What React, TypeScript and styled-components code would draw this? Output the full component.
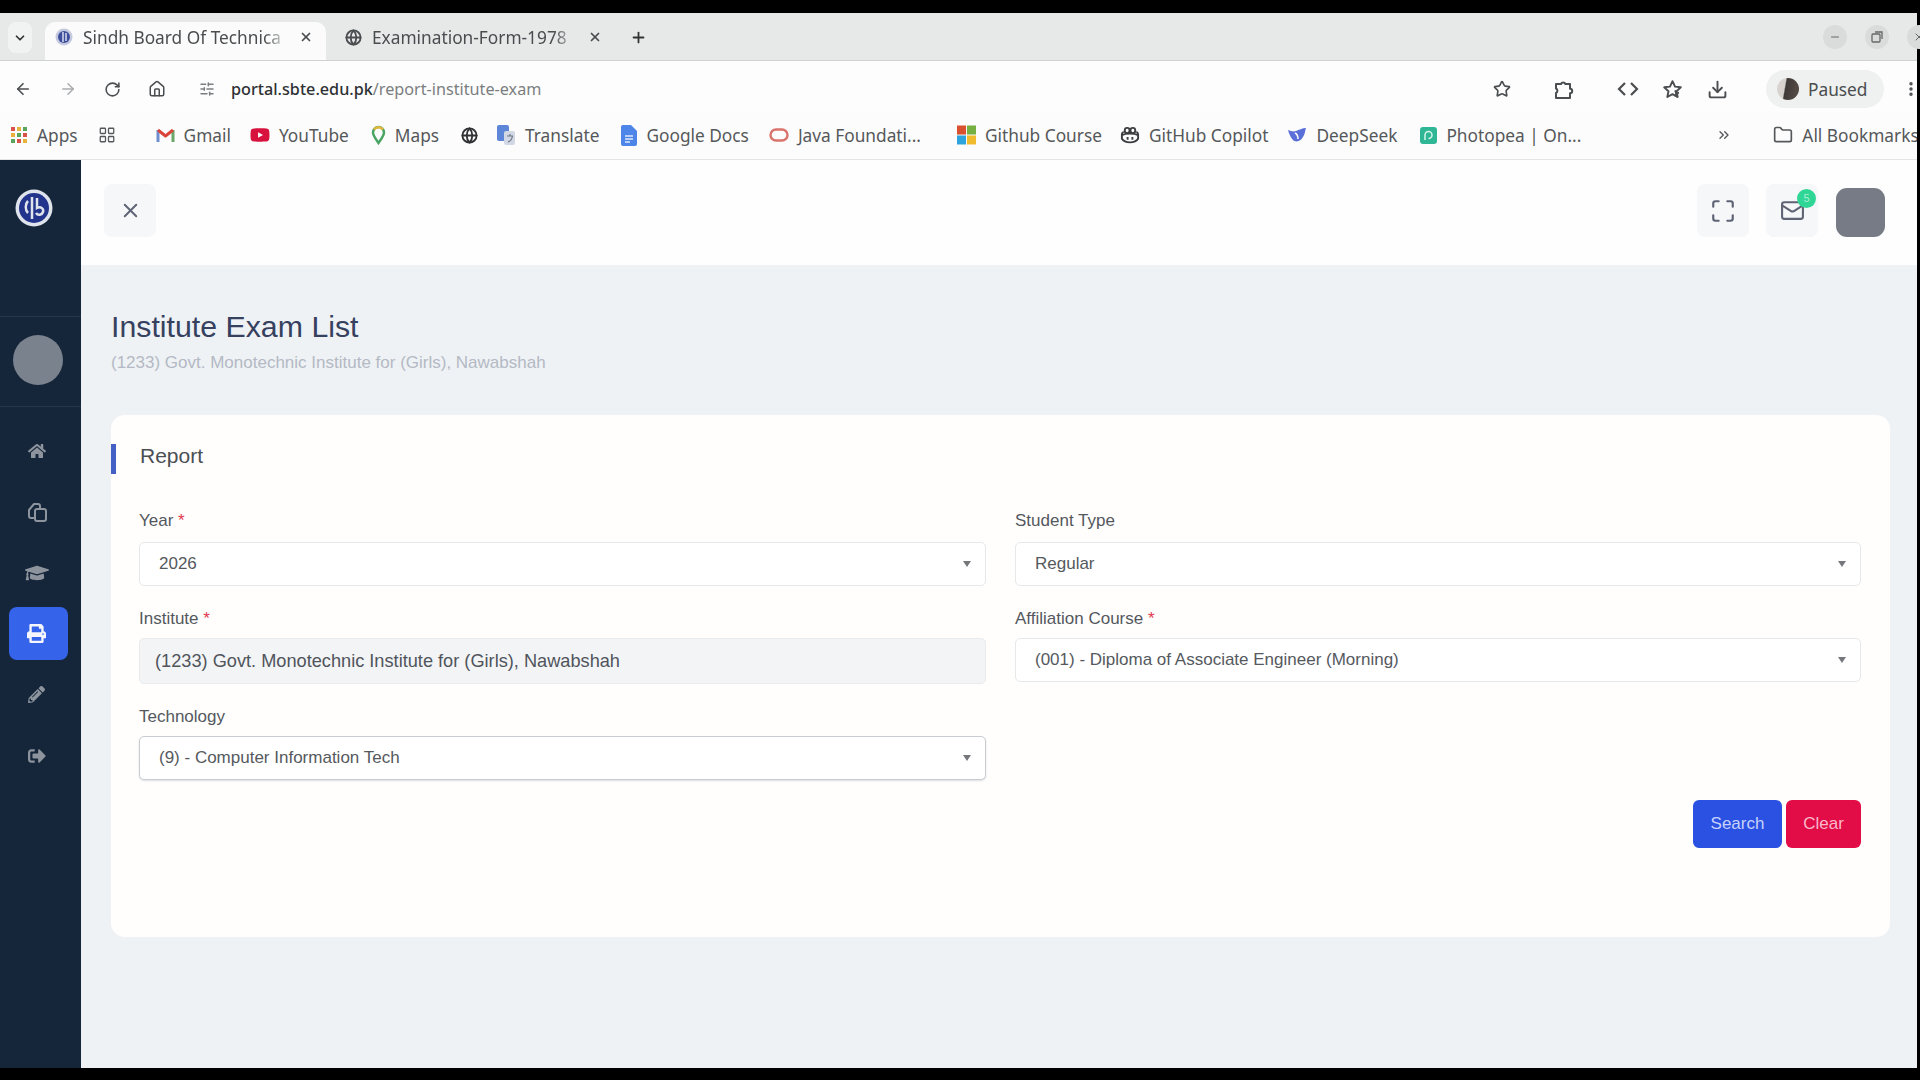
import React from "react";
import styled, { createGlobalStyle } from "styled-components";
import {
  ArrowLeft,
  ArrowRight,
  ChevronDown,
  ChevronsRight,
  Download,
  Folder,
  Globe,
  Home,
  LayoutGrid,
  Mail,
  Maximize,
  Minus,
  MoreVertical,
  Plus,
  RotateCw,
  SlidersHorizontal,
  Star,
  X,
} from "lucide-react";
import {
  FaGraduationCap,
  FaHome,
  FaPencilAlt,
  FaPrint,
  FaSignOutAlt,
  FaYoutube,
} from "react-icons/fa";

const GlobalStyle = createGlobalStyle`
  html, body {
    margin: 0;
    padding: 0;
    background: #000;
  }
  * { box-sizing: border-box; }
`;

const Screen = styled.div`
  width: 1920px;
  height: 1080px;
  background: #000;
  padding: 13px 3px 12px 0;
  display: flex;
  flex-direction: column;
  overflow: hidden;
  font-family: "Liberation Sans", Arial, sans-serif;
`;

/* browser chrome */
const TabStrip = styled.div`
  height: 48px;
  flex: none;
  background: #e6e9e8;
  border-bottom: 1px solid #cfd2d1;
  display: flex;
  align-items: flex-end;
  padding-left: 8px;
  font-family: "Noto Sans", sans-serif;
  font-size: 17.3px;
  color: #4a4d4f;
`;

const TabMenu = styled.div`
  width: 24px;
  height: 31px;
  margin-bottom: 7px;
  border-radius: 8px;
  background: #f1f3f2;
  display: flex;
  align-items: center;
  justify-content: center;
  color: #333;
`;

const Tab = styled.div<{ $active?: boolean }>`
  width: ${(p) => (p.$active ? "281px" : "280px")};
  height: 38px;
  margin-left: ${(p) => (p.$active ? "13px" : "9px")};
  padding: 0 13px 8px 10px;
  border-radius: 10px 10px 0 0;
  background: ${(p) => (p.$active ? "#fbfbfb" : "transparent")};
  display: flex;
  align-items: center;
  gap: 10px;
  white-space: nowrap;
`;

const TabTitle = styled.span`
  flex: 1;
  min-width: 0;
  -webkit-mask-image: linear-gradient(to right, #000 88%, transparent);
  mask-image: linear-gradient(to right, #000 88%, transparent);
`;

const NewTab = styled.div`
  margin: 0 0 14px 15px;
  display: flex;
  color: #333;
`;

const WindowControls = styled.div`
  margin-left: auto;
  margin-bottom: 11px;
  margin-right: -14px;
  display: flex;
  gap: 18px;
`;

const WindowButton = styled.div`
  width: 24px;
  height: 24px;
  border-radius: 50%;
  background: #d9dcdb;
  display: flex;
  align-items: center;
  justify-content: center;
  color: #666;
`;

const Toolbar = styled.div`
  height: 52px;
  flex: none;
  background: #fdfdfd;
  padding: 4px 0 0 14px;
  display: flex;
  align-items: center;
  color: #4b4e50;
`;

const NavIcons = styled.div`
  display: flex;
  align-items: center;
  gap: 27px;
`;

const Address = styled.div`
  margin-left: 33px;
  display: flex;
  align-items: center;
  gap: 16px;
  font-family: "Noto Sans", sans-serif;
  font-size: 16.2px;
  color: #7b7e80;
  b {
    font-weight: 500;
    color: #2e3133;
  }
`;

const ToolRight = styled.div`
  margin-left: auto;
  margin-right: -3px;
  display: flex;
  align-items: center;
`;

const ToolIcon = styled.span<{ $left: number }>`
  display: flex;
  margin-left: ${(p) => p.$left}px;
`;

const Paused = styled.div`
  width: 118px;
  height: 38px;
  margin-left: 38px;
  border-radius: 19px;
  background: #eff0f0;
  padding-left: 11px;
  display: flex;
  align-items: center;
  gap: 9px;
  font-family: "Noto Sans", sans-serif;
  font-size: 17.3px;
  color: #4a4d4f;
`;

const ProfilePic = styled.span`
  width: 22px;
  height: 22px;
  flex: none;
  border-radius: 50%;
  background: linear-gradient(100deg, #d9d3cf 35%, #3f3a38 40%, #5b4f49);
`;

const Bookmarks = styled.div`
  height: 47px;
  flex: none;
  background: #fcfcfc;
  border-bottom: 1px solid #e4e5e5;
  padding: 0 0 2px 11px;
  display: flex;
  align-items: center;
  overflow: hidden;
  font-family: "Noto Sans", sans-serif;
  font-size: 17.3px;
  color: #55585a;
  white-space: nowrap;
`;

const Bookmark = styled.div<{ $left: number }>`
  flex: none;
  margin-left: ${(p) => p.$left}px;
  display: flex;
  align-items: center;
  gap: 9px;
`;

/* portal */
const Portal = styled.div`
  flex: 1;
  display: flex;
  min-height: 0;
`;

const Sidebar = styled.aside`
  width: 81px;
  flex: none;
  background: #16263a;
  display: flex;
  flex-direction: column;
  align-items: center;
`;

const LogoWrap = styled.div`
  width: 100%;
  height: 157px;
  padding: 29px 13px 0 0;
  display: flex;
  justify-content: center;
  border-bottom: 1px solid #26374a;
`;

const AvatarWrap = styled.div`
  width: 100%;
  height: 90px;
  padding: 0 5px 3px 0;
  display: flex;
  align-items: center;
  justify-content: center;
  border-bottom: 1px solid #26374a;
`;

const SideAvatar = styled.div`
  width: 50px;
  height: 50px;
  border-radius: 50%;
  background: #7a828e;
`;

const SideMenu = styled.nav`
  margin-top: 17px;
  width: 100%;
  padding-left: 9px;
  display: flex;
  flex-direction: column;
  gap: 8px;
`;

const SideItem = styled.div<{ $active?: boolean }>`
  width: 59px;
  height: 53px;
  padding-right: 4px;
  border-radius: 8px;
  background: ${(p) => (p.$active ? "#3563e9" : "transparent")};
  color: ${(p) => (p.$active ? "#f4f6fc" : "#8d949d")};
  display: flex;
  align-items: center;
  justify-content: center;
`;

const Main = styled.main`
  flex: 1;
  min-width: 0;
  background: #eef2f5;
  display: flex;
  flex-direction: column;
`;

const TopBar = styled.header`
  height: 105px;
  flex: none;
  background: #fefefe;
  padding: 24px 32px 0 23px;
  display: flex;
  align-items: flex-start;
`;

const IconButton = styled.div<{ $left?: number }>`
  position: relative;
  width: 52px;
  height: 53px;
  margin-left: ${(p) => p.$left ?? 0}px;
  border-radius: 8px;
  background: #f6f7f9;
  color: #5e6375;
  display: flex;
  align-items: center;
  justify-content: center;
`;

const TopRight = styled.div`
  margin-left: auto;
  display: flex;
`;

const Badge = styled.span`
  position: absolute;
  top: 5px;
  right: 2px;
  width: 19px;
  height: 19px;
  border-radius: 50%;
  background: #2fd695;
  color: #a8efd2;
  font-size: 11px;
  line-height: 19px;
  text-align: center;
`;

const UserTile = styled.div`
  width: 49px;
  height: 49px;
  margin: 4px 0 0 18px;
  border-radius: 11px;
  background: #767b86;
`;

const Content = styled.div`
  padding: 43px 27px 0 30px;
`;

const Title = styled.h1`
  margin: 0;
  font-size: 30.3px;
  line-height: 38px;
  font-weight: 400;
  color: #36415f;
`;

const Subtitle = styled.div`
  margin-top: 7px;
  font-size: 17px;
  line-height: 20px;
  color: #b4b9c4;
`;

const Card = styled.section`
  margin-top: 42px;
  height: 522px;
  background: #fffefd;
  border-radius: 14px;
  padding-top: 29px;
`;

const CardTitle = styled.h2`
  margin: 0;
  height: 30px;
  border-left: 5px solid #4460c4;
  padding-left: 24px;
  font-size: 21px;
  line-height: 24px;
  font-weight: 400;
  color: #4b4f54;
`;

const FormGrid = styled.div`
  margin-top: 36px;
  padding: 0 0 0 28px;
  display: grid;
  grid-template-columns: 847px 846px;
  column-gap: 29px;
  row-gap: 22px;
`;

const Field = styled.div``;

const Label = styled.label<{ $tight?: boolean }>`
  display: block;
  height: 22px;
  margin-bottom: ${(p) => (p.$tight ? "8px" : "10px")};
  font-size: 17px;
  line-height: 22px;
  color: #54585e;
  em {
    font-style: normal;
    color: #e2384f;
  }
`;

const SelectBox = styled.div<{ $focus?: boolean }>`
  height: 44px;
  padding: 0 14px 0 19px;
  border: 1px solid ${(p) => (p.$focus ? "#c9ccd0" : "#e6e8ea")};
  border-radius: 5px;
  background: #fff;
  display: flex;
  align-items: center;
  justify-content: space-between;
  font-size: 17px;
  color: #55595e;
  box-shadow: ${(p) => (p.$focus ? "0 1px 2px #dcdee1" : "none")};
`;

const Caret = styled.span`
  width: 0;
  height: 0;
  border-left: 4px solid transparent;
  border-right: 4px solid transparent;
  border-top: 6px solid #74787d;
`;

const ReadOnlyInput = styled.div`
  height: 46px;
  padding-left: 15px;
  border: 1px solid #e8eaec;
  border-radius: 5px;
  background: #f3f4f6;
  display: flex;
  align-items: center;
  font-size: 18.2px;
  color: #50545c;
`;

const Actions = styled.div`
  margin: 20px 29px 0 0;
  display: flex;
  justify-content: flex-end;
  gap: 4px;
`;

const Button = styled.button<{ $color: string; $fg: string; $w: number }>`
  width: ${(p) => p.$w}px;
  height: 48px;
  border: none;
  border-radius: 6px;
  background: ${(p) => p.$color};
  color: ${(p) => p.$fg};
  font-family: "Liberation Sans", Arial, sans-serif;
  font-size: 17px;
`;

const AppsIcon = () => (
  <svg width="17" height="17" viewBox="0 0 17 17">
    {[0, 6, 12].map((y, r) =>
      [0, 6, 12].map((x, c) => (
        <rect
          key={x + "-" + y}
          x={x}
          y={y}
          width="4"
          height="4"
          fill={["#d9534a", "#e8b33c", "#5aa55c"][(r + c) % 3]}
        />
      ))
    )}
  </svg>
);

const GmailIcon = () => (
  <svg width="19" height="16" viewBox="0 0 19 16" fill="none" strokeWidth="3">
    <path d="M2 15V3" stroke="#6d8fd0" />
    <path d="M17 15V3" stroke="#6aa768" />
    <path d="M2 3l7.5 6L17 3" stroke="#d9453a" strokeLinejoin="round" />
  </svg>
);

const MapsIcon = () => (
  <svg width="15" height="20" viewBox="0 0 15 20" fill="none">
    <path d="M7.5 18C4 13 2 10.500 2 7.500a5.500 5.500 0 0 1 11 0c0 3-2 5.500-5.500 10.500z" stroke="#4aa564" strokeWidth="2.500" />
    <path d="M3 4.500a5.500 5.500 0 0 1 9 0" stroke="#e4b63c" strokeWidth="2.500" />
  </svg>
);

const TranslateIcon = () => (
  <svg width="20" height="20" viewBox="0 0 20 20">
    <rect x="1" y="0" width="12" height="16" rx="2" fill="#5d86d8" />
    <rect x="8" y="6" width="11" height="14" rx="2" fill="#d3d9e4" />
    <path d="M11 11h6M14 9v2M12 17c3-1 4-3 4.500-6" stroke="#6d7686" strokeWidth="1.200" fill="none" />
  </svg>
);

const DocsIcon = () => (
  <svg width="16" height="21" viewBox="0 0 16 21">
    <path d="M2 0h8l6 6v13a2 2 0 0 1-2 2H2a2 2 0 0 1-2-2V2a2 2 0 0 1 2-2z" fill="#4d86e8" />
    <path d="M4 11h8M4 14h8M4 17h5" stroke="#dfe9fb" strokeWidth="1.300" />
  </svg>
);

const JavaIcon = () => (
  <svg width="20" height="16" viewBox="0 0 20 16" fill="none">
    <rect x="1.500" y="2.500" width="17" height="11" rx="5.500" stroke="#d9736b" strokeWidth="2.400" />
  </svg>
);

const TilesIcon = () => (
  <svg width="19" height="20" viewBox="0 0 20 20">
    <rect width="9.500" height="9.500" fill="#d9502e" />
    <rect x="10.500" width="9.500" height="9.500" fill="#76b042" />
    <rect y="10.500" width="9.500" height="9.500" fill="#2fa3dc" />
    <rect x="10.500" y="10.500" width="9.500" height="9.500" fill="#f0bb2c" />
  </svg>
);

const CopilotIcon = () => (
  <svg width="20" height="19" viewBox="0 0 21 19" fill="none" stroke="#3a3d40" strokeWidth="2">
    <path d="M2 9c0-2 1-3 2-3M19 9c0-2-1-3-2-3" />
    <rect x="5" y="1.500" width="5" height="5.500" rx="2.500" />
    <rect x="11" y="1.500" width="5" height="5.500" rx="2.500" />
    <path d="M2 9v4c3 5 14 5 17 0V9c-4-2-13-2-17 0z" />
    <path d="M8 11v3M13 11v3" />
  </svg>
);

const DeepSeekIcon = () => (
  <svg width="20" height="16" viewBox="0 0 20 16">
    <path d="M1 3c3 1 5 2 8 1 3-1 6-3 10-3-1 3-1 6-3 9-2 4-7 6-10 3C4 11 2 7 1 3z" fill="#5b6fd8" />
    <path d="M8 6c2 1 3 3 3 6" stroke="#fff" strokeWidth="1.500" fill="none" />
  </svg>
);

const PhotopeaIcon = () => (
  <svg width="17" height="17" viewBox="0 0 17 17" fill="none">
    <rect width="17" height="17" rx="3" fill="#2fb795" />
    <path d="M5 13V8a3.500 3.500 0 1 1 3.500 3.500" stroke="#d6f4ea" strokeWidth="1.500" />
  </svg>
);

const PortalFavicon = () => (
  <svg width="18" height="18" viewBox="0 0 18 18">
    <circle cx="9" cy="9" r="8.500" fill="#c4c9e0" />
    <circle cx="9" cy="9" r="6" fill="#3d4f9a" />
    <path d="M8 4v10M11 5v8" stroke="#d8dcef" strokeWidth="1.500" />
  </svg>
);

const SbteLogo = () => (
  <svg width="38" height="38" viewBox="0 0 38 38" fill="none">
    <circle cx="19" cy="19" r="18.500" fill="#dfe4ec" />
    <circle cx="19" cy="19" r="15" fill="#22348c" />
    <path d="M13 12c-3 3-3 9 0 12M17 8v22" stroke="#dfe4ec" strokeWidth="2.500" />
    <path d="M22 9v10c4-2 7 1 6 4s-5 4-7 1" stroke="#dfe4ec" strokeWidth="2.500" />
  </svg>
);

const ExtensionIcon = () => (
  <svg width="21" height="21" viewBox="0 0 21 21" fill="none" stroke="#4b4e50" strokeWidth="2" strokeLinejoin="round">
    <path d="M3 5h5a2.400 2.400 0 0 1 4.400 0H17v4.800a2.200 2.200 0 0 1 0 4.400V19H3v-5a2.500 2.500 0 0 0 0-4.500z" />
  </svg>
);

const CodeIcon = () => (
  <svg width="22" height="16" viewBox="0 0 22 16" fill="none" stroke="#4b4e50" strokeWidth="2.200">
    <path d="M8 2L2 8l6 6M14 2l6 6-6 6" />
  </svg>
);

const BookmarkStarIcon = () => (
  <svg width="21" height="21" viewBox="0 0 24 24" fill="none" stroke="#4b4e50" strokeWidth="2.200" strokeLinejoin="round">
    <path d="M12 2.500l2.900 6.200 6.600.8-4.900 4.500 1.300 6.600-5.900-3.300-5.900 3.300 1.300-6.600L2.500 9.500l6.600-.8z" />
    <path d="M15 13l1 2.500 2.500.3-1.900 1.700.5 2.500-2.100-1.300" fill="#4b4e50" />
  </svg>
);

const FilesIcon = () => (
  <svg width="22" height="22" viewBox="0 0 22 22" fill="none" stroke="#8d949d" strokeWidth="2" strokeLinejoin="round">
    <path d="M8 17H5a2 2 0 0 1-2-2V9l5-6h4a2 2 0 0 1 2 2v2" />
    <rect x="9" y="8" width="11" height="12" rx="2" />
  </svg>
);

const bookmarks: { left: number; icon: React.ReactNode; text?: string }[] = [
  { left: 0, icon: <AppsIcon />, text: "Apps" },
  { left: 20, icon: <LayoutGrid size={18} strokeWidth={1.7} /> },
  { left: 40, icon: <GmailIcon />, text: "Gmail" },
  { left: 19, icon: <FaYoutube size={20} color="#d8123f" />, text: "YouTube" },
  { left: 22, icon: <MapsIcon />, text: "Maps" },
  { left: 22, icon: <Globe size={17} color="#2f3234" strokeWidth={2.600} /> },
  { left: 18, icon: <TranslateIcon />, text: "Translate" },
  { left: 22, icon: <DocsIcon />, text: "Google Docs" },
  { left: 20, icon: <JavaIcon />, text: "Java Foundati..." },
  { left: 36, icon: <TilesIcon />, text: "Github Course" },
  { left: 18, icon: <CopilotIcon />, text: "GitHub Copilot" },
  { left: 19, icon: <DeepSeekIcon />, text: "DeepSeek" },
  { left: 23, icon: <PhotopeaIcon />, text: "Photopea | On..." },
];

const App: React.FC = () => {
  return (
    <>
      <GlobalStyle />
      <Screen>
        <TabStrip>
          <TabMenu>
            <ChevronDown size={14} strokeWidth={3} />
          </TabMenu>
          <Tab $active>
            <PortalFavicon />
            <TabTitle>Sindh Board Of Technica</TabTitle>
            <X size={14} strokeWidth={3} />
          </Tab>
          <Tab>
            <Globe size={17} strokeWidth={2.600} />
            <TabTitle>Examination-Form-1978</TabTitle>
            <X size={14} strokeWidth={3} />
          </Tab>
          <NewTab>
            <Plus size={17} strokeWidth={2.500} />
          </NewTab>
          <WindowControls>
            <WindowButton>
              <Minus size={12} />
            </WindowButton>
            <WindowButton>
              <svg width="12" height="12" viewBox="0 0 12 12" fill="none" stroke="#666" strokeWidth="1.300">
                <rect x="1" y="3" width="8" height="8" rx="1" />
                <path d="M4 1h7v7" />
              </svg>
            </WindowButton>
            <WindowButton>
              <X size={12} />
            </WindowButton>
          </WindowControls>
        </TabStrip>

        <Toolbar>
          <NavIcons>
            <ArrowLeft size={18} strokeWidth={2.200} />
            <ArrowRight size={18} strokeWidth={2} color="#a9acae" />
            <RotateCw size={17} strokeWidth={2.200} />
            <Home size={18} strokeWidth={2} />
          </NavIcons>
          <Address>
            <SlidersHorizontal size={16} strokeWidth={2.200} />
            <span>
              <b>portal.sbte.edu.pk</b>/report-institute-exam
            </span>
          </Address>
          <ToolRight>
            <Star size={18} strokeWidth={2.200} />
            <ToolIcon $left={42}>
              <ExtensionIcon />
            </ToolIcon>
            <ToolIcon $left={43}>
              <CodeIcon />
            </ToolIcon>
            <ToolIcon $left={23}>
              <BookmarkStarIcon />
            </ToolIcon>
            <ToolIcon $left={24}>
              <Download size={21} strokeWidth={2.200} />
            </ToolIcon>
            <Paused>
              <ProfilePic />
              Paused
            </Paused>
            <ToolIcon $left={18}>
              <MoreVertical size={18} strokeWidth={2.600} />
            </ToolIcon>
          </ToolRight>
        </Toolbar>

        <Bookmarks>
          {bookmarks.map((b, i) => (
            <Bookmark key={i} $left={b.left}>
              {b.icon}
              {b.text && <span>{b.text}</span>}
            </Bookmark>
          ))}
          <Bookmark $left={135}>
            <ChevronsRight size={16} />
          </Bookmark>
          <Bookmark $left={41}>
            <Folder size={20} strokeWidth={2} />
            All Bookmarks
          </Bookmark>
        </Bookmarks>

        <Portal>
          <Sidebar>
            <LogoWrap>
              <SbteLogo />
            </LogoWrap>
            <AvatarWrap>
              <SideAvatar />
            </AvatarWrap>
            <SideMenu>
              <SideItem>
                <FaHome size={18} />
              </SideItem>
              <SideItem>
                <FilesIcon />
              </SideItem>
              <SideItem>
                <FaGraduationCap size={24} />
              </SideItem>
              <SideItem $active>
                <FaPrint size={19} />
              </SideItem>
              <SideItem>
                <FaPencilAlt size={17} />
              </SideItem>
              <SideItem>
                <FaSignOutAlt size={18} />
              </SideItem>
            </SideMenu>
          </Sidebar>

          <Main>
            <TopBar>
              <IconButton>
                <X size={23} strokeWidth={2} />
              </IconButton>
              <TopRight>
                <IconButton>
                  <Maximize size={26} strokeWidth={2} />
                </IconButton>
                <IconButton $left={17}>
                  <Mail size={25} strokeWidth={2} />
                  <Badge>5</Badge>
                </IconButton>
                <UserTile />
              </TopRight>
            </TopBar>

            <Content>
              <Title>Institute Exam List</Title>
              <Subtitle>(1233) Govt. Monotechnic Institute for (Girls), Nawabshah</Subtitle>

              <Card>
                <CardTitle>Report</CardTitle>
                <FormGrid>
                  <Field>
                    <Label>
                      Year <em>*</em>
                    </Label>
                    <SelectBox>
                      2026
                      <Caret />
                    </SelectBox>
                  </Field>
                  <Field>
                    <Label>Student Type</Label>
                    <SelectBox>
                      Regular
                      <Caret />
                    </SelectBox>
                  </Field>
                  <Field>
                    <Label $tight>
                      Institute <em>*</em>
                    </Label>
                    <ReadOnlyInput>(1233) Govt. Monotechnic Institute for (Girls), Nawabshah</ReadOnlyInput>
                  </Field>
                  <Field>
                    <Label $tight>
                      Affiliation Course <em>*</em>
                    </Label>
                    <SelectBox>
                      (001) - Diploma of Associate Engineer (Morning)
                      <Caret />
                    </SelectBox>
                  </Field>
                  <Field>
                    <Label $tight>Technology</Label>
                    <SelectBox $focus>
                      (9) - Computer Information Tech
                      <Caret />
                    </SelectBox>
                  </Field>
                </FormGrid>
                <Actions>
                  <Button $color="#2b51e3" $fg="#c6d2fb" $w={89}>
                    Search
                  </Button>
                  <Button $color="#e20d47" $fg="#f9b9cb" $w={75}>
                    Clear
                  </Button>
                </Actions>
              </Card>
            </Content>
          </Main>
        </Portal>
      </Screen>
    </>
  );
};

export default App;
